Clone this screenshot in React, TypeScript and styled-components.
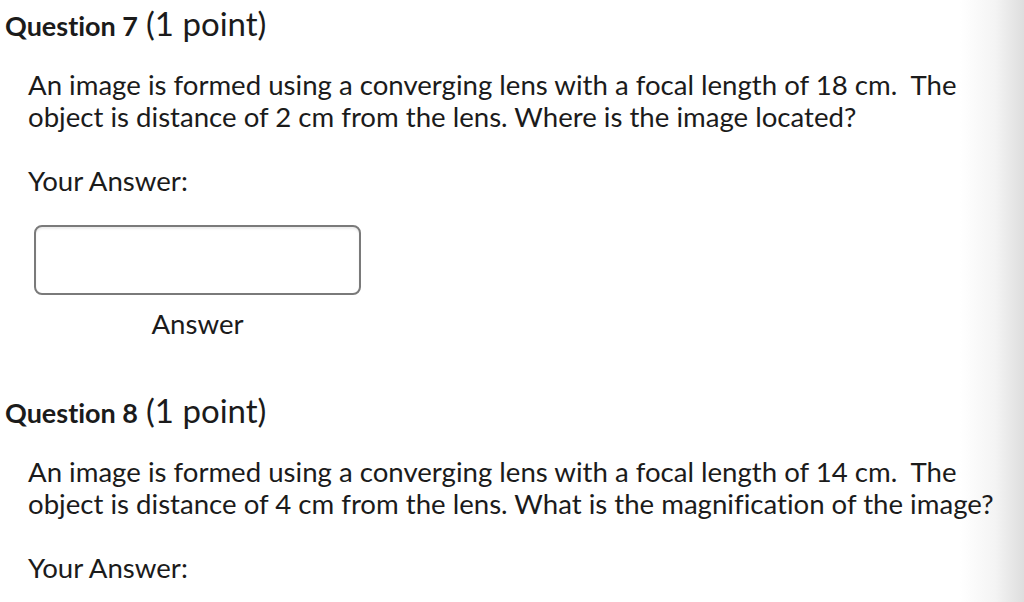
import React from 'react';
import styled, { createGlobalStyle } from 'styled-components';

const GlobalStyle = createGlobalStyle`
  html, body {
    margin: 0;
    padding: 0;
  }
  body {
    width: 1024px;
    height: 602px;
    overflow: hidden;
    font-family: Lato, 'Open Sans', sans-serif;
    font-variant-ligatures: none;
    color: #1b1b1b;
    background: linear-gradient(to right, #ffffff 0, #ffffff 960px, #f4f4f4 995px, #dedede 1024px);
  }
`;

const Page = styled.div`
  display: flex;
  flex-direction: column;
  padding: 3px 0 0 5px;
`;

const Question = styled.section`
  display: flex;
  flex-direction: column;
`;

const Heading = styled.h2`
  margin: 0;
  font-weight: 400;
  line-height: 40px;
  display: flex;
  align-items: baseline;
  gap: 8px;
`;

const Label = styled.span`
  font-size: 27px;
  font-weight: 700;
`;

const Points = styled.span`
  font-size: 33px;
  font-weight: 400;
`;

const Body = styled.div`
  padding: 23px 0 0 23px;
  display: flex;
  flex-direction: column;
  font-size: 27.6px;
`;

const Prompt = styled.p`
  margin: 0;
  line-height: 32px;
  white-space: pre;
`;

const AnswerLabel = styled.div`
  margin-top: 32px;
  line-height: 32px;
`;

const AnswerBlock = styled.div`
  display: flex;
  flex-direction: column;
  align-items: center;
  width: 327px;
  margin: 28px 0 0 6px;
`;

const Input = styled.div`
  box-sizing: border-box;
  width: 327px;
  height: 70px;
  border: 2px solid #7a7a7a;
  border-radius: 8px;
  background: #fff;
  box-shadow: inset 0 2px 2px rgba(0, 0, 0, 0.08);
`;

const SubmitLabel = styled.div`
  margin-top: 13px;
  line-height: 32px;
`;

const Spacer = styled.div`
  height: 50px;
`;

const questions = [
  {
    n: 7,
    text: [
      'An image is formed using a converging lens with a focal length of 18 cm.  The',
      'object is distance of 2 cm from the lens. Where is the image located?',
    ],
    withInput: true,
  },
  {
    n: 8,
    text: [
      'An image is formed using a converging lens with a focal length of 14 cm.  The',
      'object is distance of 4 cm from the lens. What is the magnification of the image?',
    ],
    withInput: false,
  },
];

export default function App() {
  return (
    <>
      <GlobalStyle />
      <Page>
        {questions.map((q) => (
          <Question key={q.n}>
            <Heading>
              <Label>Question {q.n}</Label>
              <Points>(1 point)</Points>
            </Heading>
            <Body>
              <Prompt>
                {q.text[0]}
                {'\n'}
                {q.text[1]}
              </Prompt>
              <AnswerLabel>Your Answer:</AnswerLabel>
              {q.withInput && (
                <>
                  <AnswerBlock>
                    <Input />
                    <SubmitLabel>Answer</SubmitLabel>
                  </AnswerBlock>
                  <Spacer />
                </>
              )}
            </Body>
          </Question>
        ))}
      </Page>
    </>
  );
}
